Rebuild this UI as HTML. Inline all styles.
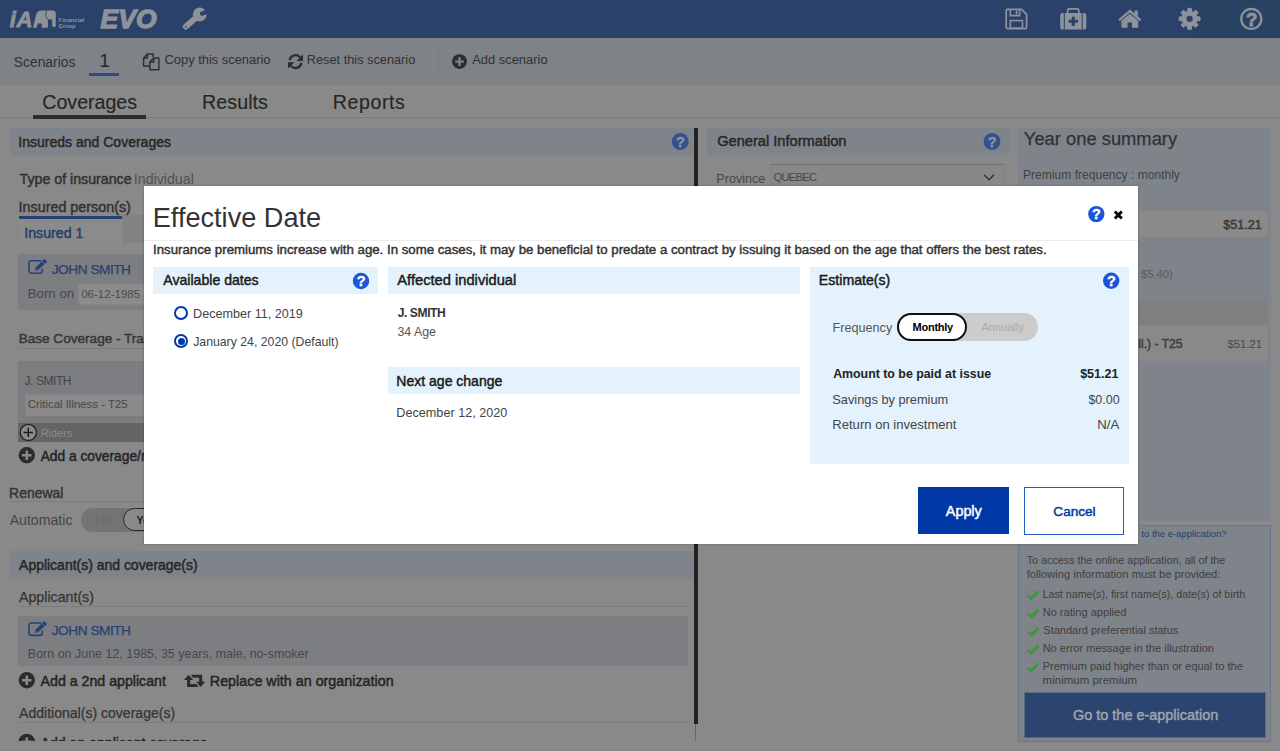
<!DOCTYPE html>
<html lang="en">
<head>
<meta charset="utf-8">
<title>EVO - Effective Date</title>
<style>
*{box-sizing:border-box;margin:0;padding:0}
html,body{width:1280px;height:751px;overflow:hidden;background:#898989;font-family:"Liberation Sans",sans-serif}
.a{position:absolute}
.t{position:absolute;white-space:nowrap;line-height:20px;height:20px}
svg{position:absolute;overflow:visible}
svg text{font-family:"Liberation Sans",sans-serif}
</style>
</head>
<body>
<!-- dimmed application page behind the dialog -->
<div id="app" aria-hidden="true">
<div class="a" style="left:0px;top:0px;width:1280px;height:38px;background:#2a4269;"></div>
<div class="a" style="left:1193.5px;top:0px;width:86.5px;height:38px;background:#284264;"></div>
<div class="a" style="left:0px;top:38px;width:1280px;height:46.5px;background:#7f8286;"></div>
<div class="a" style="left:89.2px;top:72.7px;width:29.8px;height:3.2px;background:#2d4a80;"></div>
<div class="a" style="left:433px;top:47.5px;width:1px;height:28.0px;background:#898c90;"></div>
<div class="a" style="left:0px;top:117px;width:1280px;height:1px;background:#7b7b7b;"></div>
<div class="a" style="left:32.5px;top:115px;width:113.25px;height:3.5px;background:#2d2d2d;"></div>
<div class="a" style="left:9.5px;top:128px;width:683.3px;height:27.5px;background:#7e8489;"></div>
<div class="a" style="left:693.7px;top:128.4px;width:3.9px;height:595.8px;background:#222;"></div>
<div class="a" style="left:695.3px;top:724px;width:1.0px;height:17.3px;background:#666;"></div>
<div class="a" style="left:18.75px;top:215.7px;width:103.25px;height:3.7px;background:#264070;"></div>
<div class="a" style="left:18.75px;top:219.4px;width:103.25px;height:23.4px;background:#8b8b8b;"></div>
<div class="a" style="left:122px;top:214.6px;width:566.3px;height:28.2px;background:#828283;"></div>
<div class="a" style="left:18px;top:254px;width:670.3px;height:55.8px;background:#7c7e82;"></div>
<div class="a" style="left:78.4px;top:282.8px;width:121.6px;height:22.5px;background:#8b8b8b;border:1px solid #848484;"></div>
<div class="a" style="left:18.75px;top:347.6px;width:669.55px;height:1.0px;background:#7d7d7d;"></div>
<div class="a" style="left:18px;top:361.2px;width:670.3px;height:80.4px;background:#7c7d81;"></div>
<div class="a" style="left:24.8px;top:393.7px;width:375.2px;height:22.3px;background:#8a8a8a;border:1px solid #858585;"></div>
<div class="a" style="left:18px;top:423px;width:670.3px;height:18.6px;background:#646464;"></div>
<div class="a" style="left:9.5px;top:501.3px;width:683.3px;height:1.0px;background:#7d7d7d;"></div>
<div class="a" style="left:81.25px;top:507.8px;width:84.75px;height:23.8px;background:#747474;border-radius:12px;"></div>
<div class="a" style="left:123.1px;top:507.9px;width:42.9px;height:23.5px;background:#898989;border-radius:12px;border:1.7px solid #262626;"></div>
<div class="a" style="left:9.4px;top:551px;width:683.4px;height:27.8px;background:#7e8489;"></div>
<div class="a" style="left:18.75px;top:606.3px;width:669.55px;height:1.0px;background:#7d7d7d;"></div>
<div class="a" style="left:18px;top:616.3px;width:670.3px;height:49.5px;background:#7c7e82;"></div>
<div class="a" style="left:18.75px;top:722.2px;width:669.55px;height:1.0px;background:#7d7d7d;"></div>
<div class="a" style="left:707.2px;top:128.4px;width:301.5px;height:26.6px;background:#7e8489;"></div>
<div class="a" style="left:770.2px;top:164.4px;width:233.4px;height:26.6px;background:#888888;border:1px solid #808080;border-top:1px solid #6f6f6f;"></div>
<div class="a" style="left:1018.4px;top:128px;width:252.6px;height:392.5px;background:#7e8489;"></div>
<div class="a" style="left:1023px;top:211px;width:244px;height:25.6px;background:#8a8a8a;"></div>
<div class="a" style="left:1023px;top:301.2px;width:244px;height:24.2px;background:#7f7f7f;"></div>
<div class="a" style="left:1023px;top:325.4px;width:244px;height:35.2px;background:#898989;"></div>
<div class="a" style="left:1018px;top:525.3px;width:253.3px;height:216.6px;background:#7e8489;border:1.5px solid #66778f;"></div>
<div class="a" style="left:1023.7px;top:691.75px;width:242.6px;height:46.45px;background:#2b4470;border:1px solid #5b6980;"></div>
<span class="t" style="left:9.73px;top:10px;font-size:22.2px;color:#8e9299;font-weight:700;-webkit-text-stroke:0.8px;font-style:italic;letter-spacing:0.62px;">iA</span>
<span class="t" style="left:58.58px;top:10px;font-size:5.93px;color:#8e9299;font-weight:700;">Financial</span>
<span class="t" style="left:58.57px;top:16px;font-size:5.67px;color:#8e9299;font-weight:700;">Group</span>
<span class="t" style="left:100.57px;top:9px;font-size:26.49px;color:#8e9299;font-weight:700;-webkit-text-stroke:1.3px;font-style:italic;">EVO</span>
<span class="t" style="left:13.79px;top:52px;font-size:13.85px;color:#313131;">Scenarios</span>
<span class="t" style="left:99.58px;top:51px;font-size:18.4px;color:#262626;">1</span>
<span class="t" style="left:164.56px;top:50px;font-size:12.88px;color:#313131;">Copy this scenario</span>
<span class="t" style="left:306.82px;top:50px;font-size:12.75px;color:#313131;">Reset this scenario</span>
<span class="t" style="left:472.24px;top:50px;font-size:12.91px;color:#313131;">Add scenario</span>
<span class="t" style="left:42.33px;top:92px;font-size:19.6px;color:#262626;-webkit-text-stroke:0.15px;letter-spacing:-0.013px;">Coverages</span>
<span class="t" style="left:202.12px;top:92px;font-size:19.6px;color:#262626;-webkit-text-stroke:0.15px;letter-spacing:0.077px;">Results</span>
<span class="t" style="left:332.87px;top:92px;font-size:19.6px;color:#262626;-webkit-text-stroke:0.15px;letter-spacing:0.547px;">Reports</span>
<span class="t" style="left:18.31px;top:132px;font-size:14.03px;color:#272727;-webkit-text-stroke:0.45px;">Insureds and Coverages</span>
<span class="t" style="left:19.6px;top:169px;font-size:14.2px;color:#313131;-webkit-text-stroke:0.45px;">Type of insurance</span>
<span class="t" style="left:133.81px;top:169px;font-size:14.21px;color:#505050;">Individual</span>
<span class="t" style="left:18.6px;top:197px;font-size:14.34px;color:#313131;-webkit-text-stroke:0.45px;">Insured person(s)</span>
<span class="t" style="left:24.3px;top:223px;font-size:14.18px;color:#263e6c;-webkit-text-stroke:0.45px;">Insured 1</span>
<span class="t" style="left:51.78px;top:260px;font-size:13.7px;color:#274070;-webkit-text-stroke:0.25px;letter-spacing:-0.49px;">JOHN SMITH</span>
<span class="t" style="left:27.81px;top:284px;font-size:13.22px;color:#474747;">Born on</span>
<span class="t" style="left:81.13px;top:284px;font-size:11.56px;color:#4c4c4c;">06-12-1985</span>
<span class="t" style="left:18.65px;top:329px;font-size:13.58px;color:#353535;-webkit-text-stroke:0.45px;">Base Coverage - Traditional</span>
<span class="t" style="left:24.56px;top:371px;font-size:12px;color:#444444;letter-spacing:-0.439px;">J. SMITH</span>
<span class="t" style="left:27.68px;top:394px;font-size:11.42px;color:#474747;">Critical Illness - T25</span>
<span class="t" style="left:40.66px;top:423px;font-size:10.89px;color:#8d8d8d;">Riders</span>
<span class="t" style="left:40.63px;top:447px;font-size:13.78px;color:#242424;-webkit-text-stroke:0.45px;">Add a coverage/rider</span>
<span class="t" style="left:9.09px;top:483px;font-size:13.94px;color:#353535;-webkit-text-stroke:0.45px;">Renewal</span>
<span class="t" style="left:9.64px;top:510px;font-size:14.15px;color:#454545;">Automatic</span>
<span class="t" style="left:95.59px;top:510px;font-size:12.01px;color:#696969;">No</span>
<span class="t" style="left:136.45px;top:510px;font-size:10.6px;color:#1d1d1d;font-weight:700;">Yes</span>
<span class="t" style="left:19.07px;top:555px;font-size:13.98px;color:#272727;-webkit-text-stroke:0.45px;">Applicant(s) and coverage(s)</span>
<span class="t" style="left:19.02px;top:587px;font-size:14.19px;color:#343434;-webkit-text-stroke:0.25px;">Applicant(s)</span>
<span class="t" style="left:51.78px;top:621px;font-size:13.7px;color:#274070;-webkit-text-stroke:0.25px;letter-spacing:-0.49px;">JOHN SMITH</span>
<span class="t" style="left:27.83px;top:644px;font-size:12.47px;color:#474747;">Born on June 12, 1985, 35 years, male, no-smoker</span>
<span class="t" style="left:40.62px;top:671px;font-size:14.18px;color:#242424;-webkit-text-stroke:0.45px;">Add a 2nd applicant</span>
<span class="t" style="left:209.84px;top:671px;font-size:14.32px;color:#242424;-webkit-text-stroke:0.45px;">Replace with an organization</span>
<span class="t" style="left:19.02px;top:703px;font-size:14.06px;color:#343434;-webkit-text-stroke:0.25px;">Additional(s) coverage(s)</span>
<span class="t" style="left:40.62px;top:733px;font-size:14.08px;color:#242424;-webkit-text-stroke:0.45px;">Add an applicant coverage</span>
<span class="t" style="left:717.13px;top:131px;font-size:14.65px;color:#272727;-webkit-text-stroke:0.45px;">General Information</span>
<span class="t" style="left:716.32px;top:169px;font-size:12.6px;color:#474747;">Province</span>
<span class="t" style="left:773.4px;top:167px;font-size:11.2px;color:#474747;letter-spacing:-0.711px;">QUEBEC</span>
<span class="t" style="left:1023.85px;top:129px;font-size:18.35px;color:#323232;-webkit-text-stroke:0.25px;">Year one summary</span>
<span class="t" style="left:1023.04px;top:165px;font-size:12.07px;color:#424242;">Premium frequency : monthly</span>
<span class="t" style="left:1223.25px;top:215px;font-size:12.55px;color:#393939;-webkit-text-stroke:0.45px;">$51.21</span>
<span class="t" style="left:1141.01px;top:264px;font-size:11.24px;color:#5b5b5b;">$5.40)</span>
<span class="t" style="left:1138.32px;top:334px;font-size:12.15px;color:#3c3c3c;-webkit-text-stroke:0.45px;">ll.) - T25</span>
<span class="t" style="left:1227.51px;top:334px;font-size:11.33px;color:#474747;">$51.21</span>
<span class="t" style="left:1141.37px;top:524px;font-size:9.47px;color:#273f70;">to the e-application?</span>
<span class="t" style="left:1026.67px;top:550px;font-size:10.78px;color:#3e3e3e;">To access the online application, all of the</span>
<span class="t" style="left:1026.7px;top:564px;font-size:11.18px;color:#3e3e3e;">following information must be provided:</span>
<span class="t" style="left:1042.64px;top:584px;font-size:10.69px;color:#3e3e3e;">Last name(s), first name(s), date(s) of birth</span>
<span class="t" style="left:1042.64px;top:602px;font-size:11.09px;color:#3e3e3e;">No rating applied</span>
<span class="t" style="left:1043.33px;top:620px;font-size:10.99px;color:#3e3e3e;">Standard preferential status</span>
<span class="t" style="left:1042.64px;top:638px;font-size:11.06px;color:#3e3e3e;">No error message in the illustration</span>
<span class="t" style="left:1042.65px;top:656px;font-size:11.05px;color:#3e3e3e;">Premium paid higher than or equal to the</span>
<span class="t" style="left:1042.62px;top:670px;font-size:11.5px;color:#3e3e3e;">minimum premium</span>
<span class="t" style="left:1073.03px;top:705px;font-size:14.44px;color:#9fa4aa;-webkit-text-stroke:0.45px;">Go to the e-application</span>
<svg width="1280" height="751" viewBox="0 0 1280 751" style="left:0;top:0">
<path d="M32.9 27.8L36.2 14.6Q37.3 10.4 41.6 10.4H52.4Q55.8 10.4 55.8 13.8V25.4Q55.8 27 54.2 27H53.6Q52.1 27 52.1 25.4V19.4H47.9V27.8H41.8V23.4H37.6L36.5 27.8Z" fill="#8e9299"/>
<path d="M46.6 10.6Q45.2 14 45.9 16.6Q46.5 18.6 48.4 19.4" fill="none" stroke="#2a4269" stroke-width="0.9"/>
<g transform="translate(199.7 14.5) rotate(139)"><circle cx="0" cy="0" r="6.9" fill="#8e9299"/><rect x="3" y="-3" width="18.3" height="6" rx="2.7" fill="#8e9299"/><circle cx="18.4" cy="0" r="0.85" fill="#2a4269"/><g transform="rotate(-161)"><rect x="0.6" y="-2.2" width="9" height="4.4" rx="1.6" fill="#2a4269"/></g></g>
<path d="M1007.2 9.4H1021.6L1026.6 14.4V27.2a1.4 1.4 0 0 1 -1.4 1.4H1007.6a1.4 1.4 0 0 1 -1.4 -1.4V10.8a1.4 1.4 0 0 1 1 -1.4Z" fill="none" stroke="#8e9299" stroke-width="1.7" stroke-linejoin="round"/>
<path d="M1010.3 9.6V15.6H1019.6V9.6M1016.6 10.6V14.4" fill="none" stroke="#8e9299" stroke-width="1.6"/>
<rect x="1010.3" y="20.6" width="12.2" height="7.6" fill="none" stroke="#8e9299" stroke-width="1.6"/>
<rect x="1060.2" y="13" width="26.1" height="16.5" rx="2.6" fill="#8e9299"/>
<path d="M1067.6 13V10.4a1.6 1.6 0 0 1 1.6 -1.6H1077.3a1.6 1.6 0 0 1 1.6 1.6V13" fill="none" stroke="#8e9299" stroke-width="1.7"/>
<path d="M1064.3 13V29.5M1082.2 13V29.5" stroke="#2a4269" stroke-width="1"/>
<path d="M1068.6 21.3H1077.9M1073.25 16.7V25.9" stroke="#2a4269" stroke-width="3"/>
<path d="M1118.2 19.4L1129.8 9.4L1134.6 13.5V10.6H1137.8V16.2L1141.4 19.4L1139.9 21.2L1129.8 12.6L1119.7 21.2Z" fill="#8e9299"/>
<path d="M1121.4 20.8L1129.8 13.8L1138.2 20.8V27.8H1132V22.4H1127.6V27.8H1121.4Z" fill="#8e9299"/>
<path d="M1187.57 11.48 L1187.81 8.35 L1191.39 8.35 L1191.63 11.48 L1193.35 12.19 L1195.72 10.14 L1198.26 12.68 L1196.21 15.05 L1196.92 16.77 L1200.05 17.01 L1200.05 20.59 L1196.92 20.83 L1196.21 22.55 L1198.26 24.92 L1195.72 27.46 L1193.35 25.41 L1191.63 26.12 L1191.39 29.25 L1187.81 29.25 L1187.57 26.12 L1185.85 25.41 L1183.48 27.46 L1180.94 24.92 L1182.99 22.55 L1182.28 20.83 L1179.15 20.59 L1179.15 17.01 L1182.28 16.77 L1182.99 15.05 L1180.94 12.68 L1183.48 10.14 L1185.85 12.19Z" fill="#8e9299" stroke="#8e9299" stroke-width="1" stroke-linejoin="round"/>
<circle cx="1189.6" cy="18.8" r="3.15" fill="#2a4269"/>
<circle cx="1251.3" cy="18.9" r="10.05" fill="none" stroke="#8e9299" stroke-width="2.2"/>
<text x="1251.6" y="25.6" font-size="18.5" font-weight="700" text-anchor="middle" fill="#8e9299" stroke="#8e9299" stroke-width="0.9">?</text>
<path d="M147.4 54H153.2V57.2M149 66H143.6V58L147.4 54V58H143.6" fill="none" stroke="#2d2d2d" stroke-width="1.4" stroke-linejoin="round"/>
<path d="M153.8 58H158.9V69.7H149.8V62L153.8 58V62H149.8" fill="none" stroke="#2d2d2d" stroke-width="1.4" stroke-linejoin="round"/>
<path d="M289.6 60.2A6.1 6.1 0 0 1 300.4 57.6" fill="none" stroke="#2d2d2d" stroke-width="2.3"/>
<path d="M303 54.6V61H296.6Z" fill="#2d2d2d"/>
<path d="M301.4 63A6.1 6.1 0 0 1 290.6 65.6" fill="none" stroke="#2d2d2d" stroke-width="2.3"/>
<path d="M288 68.6V62.2H294.4Z" fill="#2d2d2d"/>
<circle cx="459.5" cy="61.6" r="7.4" fill="#2d2d2d"/><path d="M455.208 61.6H463.792M459.5 57.308V65.892" stroke="#7f8286" stroke-width="2.32" fill="none"/>
<circle cx="680.2" cy="141.5" r="8.4" fill="#33508f"/><text x="680.35" y="146.75" font-size="14.4" font-weight="700" text-anchor="middle" fill="#8e959c" stroke="#8e959c" stroke-width="0.35">?</text>
<circle cx="992" cy="141.5" r="8.4" fill="#33508f"/><text x="992.15" y="146.75" font-size="14.4" font-weight="700" text-anchor="middle" fill="#8e959c" stroke="#8e959c" stroke-width="0.35">?</text>
<path d="M40.8 260.8H31.4a2.4 2.4 0 0 0 -2.4 2.4V270.8a2.4 2.4 0 0 0 2.4 2.4H39.8a2.4 2.4 0 0 0 2.4 -2.4V269.2" fill="none" stroke="#25417d" stroke-width="1.6" stroke-linecap="round"/><path d="M34.9 270.7L35.5 267.5L43.7 259.3a0.9 0.9 0 0 1 1.2 0L46.599999999999994 261a0.9 0.9 0 0 1 0 1.2L38.1 270.1Z" fill="#25417d"/><path d="M41.9 261.1L44.5 263.7" stroke="#7c7e82" stroke-width="0.7"/><path d="M36.1 268.6l1 1l-1.3 0.3z" fill="#7c7e82"/>
<path d="M40.8 623.0H31.4a2.4 2.4 0 0 0 -2.4 2.4V633.0a2.4 2.4 0 0 0 2.4 2.4H39.8a2.4 2.4 0 0 0 2.4 -2.4V631.4000000000001" fill="none" stroke="#25417d" stroke-width="1.6" stroke-linecap="round"/><path d="M34.9 632.9000000000001L35.5 629.7L43.7 621.5a0.9 0.9 0 0 1 1.2 0L46.599999999999994 623.2a0.9 0.9 0 0 1 0 1.2L38.1 632.3000000000001Z" fill="#25417d"/><path d="M41.9 623.3000000000001L44.5 625.9000000000001" stroke="#7c7e82" stroke-width="0.7"/><path d="M36.1 630.8000000000001l1 1l-1.3 0.3z" fill="#7c7e82"/>
<circle cx="28.3" cy="432.4" r="8" fill="#8a8a8a" stroke="#1c1c1c" stroke-width="1.2"/><path d="M23.6 432.4H33M28.3 427.7V437.1" stroke="#1c1c1c" stroke-width="1.5"/>
<circle cx="26.8" cy="455.3" r="8.2" fill="#2b2b2b"/><path d="M22.044 455.3H31.556M26.8 450.54400000000004V460.056" stroke="#898989" stroke-width="2.56" fill="none"/>
<circle cx="26.8" cy="680.2" r="8.2" fill="#2b2b2b"/><path d="M22.044 680.2H31.556M26.8 675.4440000000001V684.956" stroke="#898989" stroke-width="2.56" fill="none"/>
<circle cx="26.8" cy="741.9" r="8.2" fill="#2b2b2b"/><path d="M22.044 741.9H31.556M26.8 737.144V746.656" stroke="#898989" stroke-width="2.56" fill="none"/>
<path d="M188.6 674.7L193.3 679.9H190.1V684H196.4L198.4 686.9H187.1V679.9H184Z" fill="#2b2b2b"/>
<path d="M200.6 686.9L196 681.8H199.2V677.7H193L191 674.7H202.2V681.8H205.3Z" fill="#2b2b2b"/>
<path d="M984 174.8L989 179.8L994 174.8" fill="none" stroke="#333" stroke-width="1.5"/>
<path d="M1028.1000000000001 595.5L1031.3000000000002 598.6L1038.4 591.3" fill="none" stroke="#3e963e" stroke-width="2.8"/>
<path d="M1028.1000000000001 614.0L1031.3000000000002 617.1L1038.4 609.8" fill="none" stroke="#3e963e" stroke-width="2.8"/>
<path d="M1028.1000000000001 631.9L1031.3000000000002 635.0L1038.4 627.6999999999999" fill="none" stroke="#3e963e" stroke-width="2.8"/>
<path d="M1028.1000000000001 649.8L1031.3000000000002 652.9L1038.4 645.5999999999999" fill="none" stroke="#3e963e" stroke-width="2.8"/>
<path d="M1028.1000000000001 667.7L1031.3000000000002 670.8000000000001L1038.4 663.5" fill="none" stroke="#3e963e" stroke-width="2.8"/>
</svg>
<div class="a" style="left:0;top:741.3px;width:1016px;height:10px;background:#898989"></div>
</div>
<!-- modal dialog -->
<div id="dlg" role="dialog" aria-modal="true" aria-label="Effective Date">
<div class="a" style="left:143.5px;top:185.5px;width:994.5px;height:358.2px;background:#fff;box-shadow:0 0 2px rgba(0,0,0,.3);"></div>
<div class="a" style="left:143.5px;top:240.2px;width:994.5px;height:1.0px;background:#ececec;"></div>
<div class="a" style="left:153px;top:267px;width:225px;height:26.75px;background:#e3f2fd;"></div>
<div class="a" style="left:387.5px;top:267px;width:412.5px;height:26.75px;background:#e3f2fd;"></div>
<div class="a" style="left:387.5px;top:367px;width:412.5px;height:26.75px;background:#e3f2fd;"></div>
<div class="a" style="left:809.5px;top:267px;width:319.0px;height:196.75px;background:#e3f2fd;"></div>
<div class="a" style="left:897px;top:313px;width:140.5px;height:28.25px;background:#cccccc;border-radius:14.2px;"></div>
<div class="a" style="left:897px;top:313px;width:70px;height:28.25px;background:#fff;border-radius:14.2px;border:2px solid #111;"></div>
<div class="a" style="left:917.5px;top:487px;width:91.75px;height:47.25px;background:#0039a6;"></div>
<div class="a" style="left:1023.75px;top:487px;width:100.0px;height:47.75px;background:#fff;border:1px solid #2a5bc4;"></div>
<div class="a" style="left:174px;top:306.3px;width:14.2px;height:14.2px;background:#fff;border-radius:50%;border:2px solid #0039a6;"></div>
<div class="a" style="left:174px;top:334.2px;width:14.2px;height:14.2px;background:#fff;border-radius:50%;border:2px solid #0039a6;"></div>
<div class="a" style="left:177.6px;top:337.8px;width:7.0px;height:7.0px;background:#0039a6;border-radius:50%;"></div>
<span class="t" style="left:152.76px;top:208px;font-size:27.13px;color:#333;">Effective Date</span>
<span class="t" style="left:153.07px;top:240px;font-size:13.24px;color:#333;-webkit-text-stroke:0.45px;">Insurance premiums increase with age. In some cases, it may be beneficial to predate a contract by issuing it based on the age that offers the best rates.</span>
<span class="t" style="left:163.32px;top:270px;font-size:14.1px;color:#1a1a1a;-webkit-text-stroke:0.45px;">Available dates</span>
<span class="t" style="left:193.07px;top:304px;font-size:12.61px;color:#444;">December 11, 2019</span>
<span class="t" style="left:193.16px;top:332px;font-size:12.29px;color:#444;">January 24, 2020 (Default)</span>
<span class="t" style="left:397.32px;top:270px;font-size:14.69px;color:#1a1a1a;-webkit-text-stroke:0.45px;">Affected individual</span>
<span class="t" style="left:397.65px;top:303px;font-size:12.1px;color:#333;font-weight:700;letter-spacing:-0.414px;">J. SMITH</span>
<span class="t" style="left:397.54px;top:322px;font-size:12.3px;color:#555;">34 Age</span>
<span class="t" style="left:396.34px;top:371px;font-size:14.02px;color:#1a1a1a;-webkit-text-stroke:0.45px;">Next age change</span>
<span class="t" style="left:396.32px;top:403px;font-size:12.65px;color:#444;">December 12, 2020</span>
<span class="t" style="left:818.83px;top:270px;font-size:14.15px;color:#1a1a1a;-webkit-text-stroke:0.45px;">Estimate(s)</span>
<span class="t" style="left:832.57px;top:318px;font-size:12.64px;color:#555;">Frequency</span>
<span class="t" style="left:912.53px;top:317px;font-size:11px;color:#000;font-weight:700;letter-spacing:-0.246px;">Monthly</span>
<span class="t" style="left:981.49px;top:317px;font-size:11.0px;color:#aaa;">Annually</span>
<span class="t" style="left:833.14px;top:364px;font-size:12.36px;color:#222;font-weight:700;">Amount to be paid at issue</span>
<span class="t" style="left:1080.15px;top:364px;font-size:12.51px;color:#222;font-weight:700;">$51.21</span>
<span class="t" style="left:832.32px;top:390px;font-size:12.81px;color:#444;">Savings by premium</span>
<span class="t" style="left:1088.41px;top:390px;font-size:12.52px;color:#444;">$0.00</span>
<span class="t" style="left:832.31px;top:415px;font-size:13.07px;color:#444;">Return on investment</span>
<span class="t" style="left:1097.3px;top:415px;font-size:13.25px;color:#444;">N/A</span>
<span class="t" style="left:945.82px;top:501px;font-size:14.37px;color:#fff;-webkit-text-stroke:0.45px;">Apply</span>
<span class="t" style="left:1053.35px;top:502px;font-size:13.59px;color:#0039a6;-webkit-text-stroke:0.45px;">Cancel</span>
<svg width="1280" height="751" viewBox="0 0 1280 751" style="left:0;top:0">
<circle cx="1096.3" cy="214.1" r="8.2" fill="#1b56d8"/><text x="1096.45" y="219.35" font-size="14.4" font-weight="700" text-anchor="middle" fill="#fff" stroke="#fff" stroke-width="0.35">?</text>
<circle cx="361" cy="281" r="8.2" fill="#1b56d8"/><text x="361.15" y="286.25" font-size="14.4" font-weight="700" text-anchor="middle" fill="#fff" stroke="#fff" stroke-width="0.35">?</text>
<circle cx="1111.2" cy="280.8" r="8.2" fill="#1b56d8"/><text x="1111.3500000000001" y="286.05" font-size="14.4" font-weight="700" text-anchor="middle" fill="#fff" stroke="#fff" stroke-width="0.35">?</text>
<path d="M1114.8 211.15L1121.8 218.15M1121.8 211.15L1114.8 218.15" stroke="#000" stroke-width="3" transform="translate(0 0.3)"/>
</svg>
</div>
</body>
</html>
